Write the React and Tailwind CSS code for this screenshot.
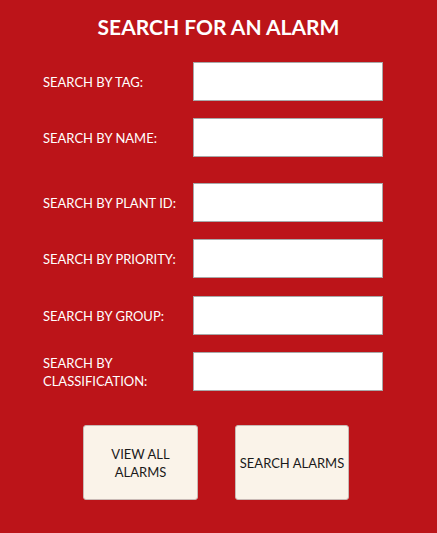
const rows = [
  { label: "SEARCH BY TAG:", mt: "mt-[20px]" },
  { label: "SEARCH BY NAME:", mt: "mt-[17px]" },
  { label: "SEARCH BY PLANT ID:", mt: "mt-[26px]" },
  { label: "SEARCH BY PRIORITY:", mt: "mt-[17px]" },
  { label: "SEARCH BY GROUP:", mt: "mt-[18px]" },
  { label: ["SEARCH BY", "CLASSIFICATION:"], mt: "mt-[17px]" },
];

const App = () => {
  return (
    <div className="w-[437px] h-[533px] bg-[#bc1419] font-['Lato','Liberation_Sans',sans-serif] flex flex-col">
      <h1 className="mt-[10px] h-[32px] flex items-center justify-center text-white font-bold text-[21px] leading-none">
        SEARCH FOR AN ALARM
      </h1>

      {rows.map((row, index) => (
        <div key={index} className={`${row.mt} flex items-center pl-[43px]`}>
          <div className="w-[150px] text-white text-[13px] leading-[18px]">
            {Array.isArray(row.label)
              ? row.label.map((line) => <div key={line}>{line}</div>)
              : row.label}
          </div>
          <input
            type="text"
            className="w-[190px] h-[39px] bg-white border border-[#a8a8a8] outline-none"
          />
        </div>
      ))}

      <div className="mt-[34px] flex gap-[37px] pl-[83px]">
        <button className="w-[115px] h-[75px] bg-[#faf3e9] border border-[#c9b9b5] rounded-[3px] text-[#1a1a1a] text-[13px] leading-[18px] flex items-center justify-center text-center">
          VIEW ALL
          <br />
          ALARMS
        </button>
        <button className="w-[114px] h-[75px] bg-[#faf3e9] border border-[#c9b9b5] rounded-[3px] text-[#1a1a1a] text-[13px] leading-[18px] flex items-center justify-center text-center">
          SEARCH ALARMS
        </button>
      </div>
    </div>
  );
};

export default App;
